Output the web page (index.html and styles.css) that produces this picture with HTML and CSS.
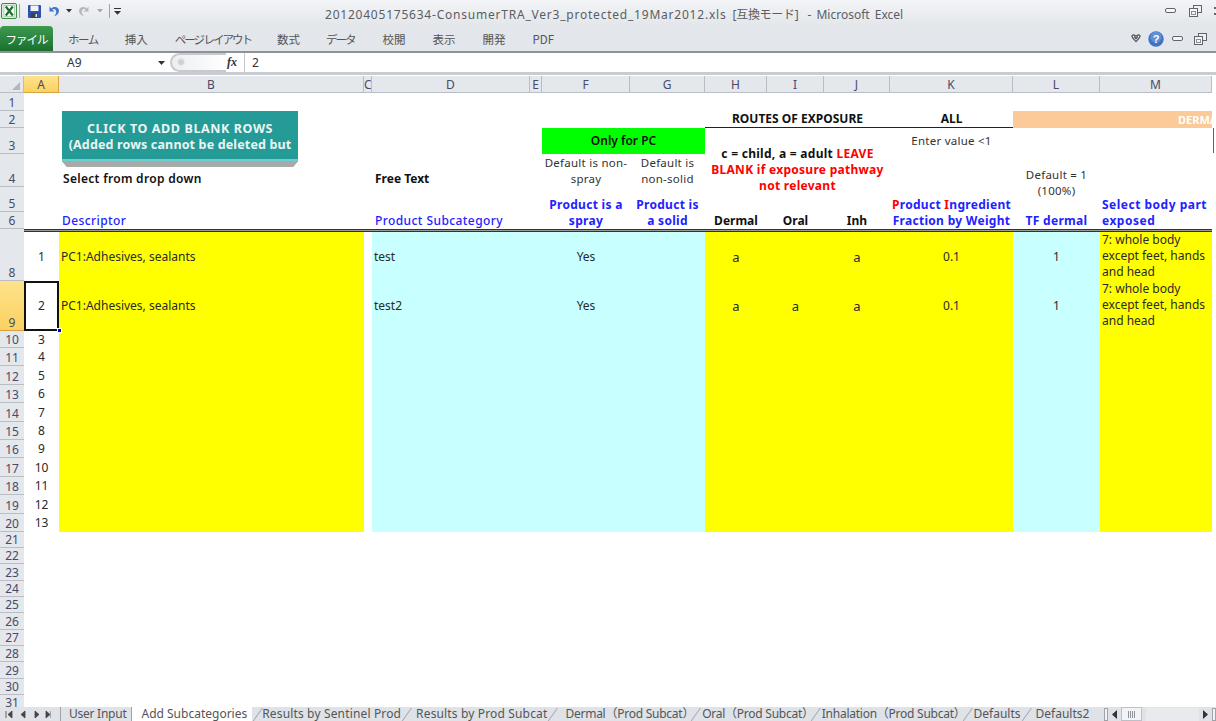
FILE: index.html
```html
<!DOCTYPE html>
<html lang="ja">
<head>
<meta charset="utf-8">
<title>Microsoft Excel</title>
<link rel="stylesheet" href="styles.css">
</head>
<body>
<div class="app">
  <header class="titlebar">
    <div class="qat">
      <svg class="q-excel" width="16" height="16" viewBox="0 0 16 16"><rect x=".5" y=".5" width="15" height="15" rx="1.5" fill="#dcefd8" stroke="#3f8a4a"/><rect x="3" y="2.5" width="10.5" height="11" fill="#fff" stroke="#7fb98a" stroke-width=".6"/><path d="M4.8 3.5 L11.8 12.5 M11.8 3.5 L4.8 12.5" stroke="#1d6f32" stroke-width="2.2"/></svg>
      <span class="qat-sep q-sep1"></span>
      <svg class="q-save" width="15" height="15" viewBox="0 0 15 15"><rect x="1" y="1" width="13" height="13" rx="1" fill="#2f4fa8"/><rect x="3.5" y="1.5" width="8" height="5.5" fill="#f2f4f8"/><rect x="4" y="9" width="7" height="5" fill="#39404e"/><rect x="8.5" y="10" width="1.6" height="3" fill="#dfe3ea"/></svg>
      <svg class="q-undo" width="14" height="14" viewBox="0 0 14 14"><path d="M3.5 2.5 V7.5 H8.5 L6.4 5.4 C8 4.4 10.4 5.4 10.2 8.2 C10.1 9.7 9.2 11 8 12 C11 11.6 13 9.6 13 7 C13 3.4 8.6 1.6 5.4 4.4 Z" fill="#3f78c8"/></svg>
      <svg class="q-drop" width="6" height="4" viewBox="0 0 6 4"><path d="M0 0 H6 L3 3.5 Z" fill="#333"/></svg>
      <svg class="q-drop" width="13" height="14" viewBox="0 0 13 14"><path d="M10.5 2.5 V7.5 H5.5 L7.6 5.4 C6 4.4 3.6 5.4 3.8 8.2 C3.9 9.7 4.8 11 6 12 C3 11.6 1 9.6 1 7 C1 3.4 5.4 1.6 8.6 4.4 Z" fill="#b4b9c0"/></svg>
      <svg class="q-drop" width="6" height="4" viewBox="0 0 6 4"><path d="M0 0 H6 L3 3.5 Z" fill="#a4a8ae"/></svg>
      <span class="qat-sep q-drop"></span>
      <svg class="q-more" width="7" height="7" viewBox="0 0 7 7"><path d="M0 0 H7 V1 H0 Z M0 3 H7 L3.5 6.8 Z" fill="#333"/></svg>
    </div>
    <div class="doc-title"><span class="doc-name">20120405175634-ConsumerTRA_Ver3_protected_19Mar2012.xls</span> <span class="doc-mode">[互換モード]</span> <span class="doc-app">- Microsoft Excel</span></div>
    <div class="winctl">
      <svg width="12" height="8" viewBox="0 0 12 8"><rect x=".5" y="1.5" width="10" height="4" rx="1.5" fill="#f6f7f9" stroke="#60656c"/></svg>
      <svg width="13" height="12" viewBox="0 0 13 12"><rect x="4.5" y=".5" width="8" height="7" fill="#eef0f3" stroke="#60656c"/><rect x=".5" y="3.5" width="8" height="8" fill="#f6f7f9" stroke="#60656c"/><rect x="2.5" y="6.5" width="4" height="3" fill="none" stroke="#8a8f96"/></svg>
      <svg width="2" height="8" viewBox="0 0 2 8"><path d="M0 0 H2 V2 H0 Z M0 6 H2 V8 H0 Z" fill="#60656c"/></svg>
    </div>
  </header>

  <nav class="ribbon">
    <div class="file-tab">ファイル</div>
    <ul class="tabs">
      <li class="t-home">ホーム</li>
      <li class="t-ins">挿入</li>
      <li class="t-page">ページ レイアウト</li>
      <li class="t-form">数式</li>
      <li class="t-data">データ</li>
      <li class="t-rev">校閲</li>
      <li class="t-view">表示</li>
      <li class="t-dev">開発</li>
      <li class="t-pdf">PDF</li>
    </ul>
    <div class="ribbon-ctl">
      <svg width="10" height="9" viewBox="0 0 10 9"><path d="M1 2 C1 .6 3.4 .6 5 2.4 C6.6 .6 9 .6 9 2 C9 3.6 6.4 6 5 7.6 C3.6 6 1 3.6 1 2 Z M3 2.6 L5 4.8 L7 2.6" fill="#fff" stroke="#54585e" stroke-width="1.3"/></svg>
      <svg class="help" width="16" height="16" viewBox="0 0 16 16"><circle cx="8" cy="8" r="7.7" fill="#3f73c4"/><circle cx="8" cy="6" r="5.6" fill="#7ea6e2" opacity=".55"/><text x="8" y="12" text-anchor="middle" class="help-q">?</text></svg>
      <svg class="rb-min" width="12" height="8" viewBox="0 0 12 8"><rect x=".5" y="1.5" width="10" height="4" rx="1.5" fill="#f6f7f9" stroke="#60656c"/></svg>
      <svg class="restore" width="13" height="12" viewBox="0 0 13 12"><rect x="4.5" y=".5" width="8" height="7" fill="#eef0f3" stroke="#60656c"/><rect x=".5" y="3.5" width="8" height="8" fill="#f6f7f9" stroke="#60656c"/><rect x="2.5" y="6.5" width="4" height="3" fill="none" stroke="#8a8f96"/></svg>
    </div>
  </nav>

  <div class="formula">
    <div class="namebox"><span class="name">A9</span><svg width="7" height="4" viewBox="0 0 7 4"><path d="M0 0 H7 L3.5 4 Z" fill="#333"/></svg></div>
    <div class="fx-zone"><span class="fx-grip"></span><span class="fx">fx</span></div>
    <div class="fx-value">2</div>
  </div>

  <div class="sheet">
    <table class="grid">
      <colgroup>
        <col class="c-rh"><col class="c-a"><col class="c-b"><col class="c-c"><col class="c-d"><col class="c-e"><col class="c-f"><col class="c-g"><col class="c-h"><col class="c-i"><col class="c-j"><col class="c-k"><col class="c-l"><col class="c-m">
      </colgroup>
      <thead>
        <tr class="colheads">
          <th class="corner"><span class="corner-mark"></span></th><th class="active">A</th><th>B</th><th>C</th><th>D</th><th>E</th><th>F</th><th>G</th><th>H</th><th>I</th><th>J</th><th>K</th><th>L</th><th>M</th>
        </tr>
      </thead>
      <tbody>
        <tr class="r1"><th>1</th><td colspan="13"></td></tr>
        <tr class="r2"><th>2</th><td colspan="7"></td><td colspan="3" class="hd-black ctr rule-b">ROUTES OF EXPOSURE</td><td class="hd-black ctr rule-b">ALL</td><td colspan="2" class="peach">DERMAL</td></tr>
        <tr class="r3"><th>3</th><td colspan="5"></td><td colspan="2" class="green">Only for PC</td><td colspan="3" rowspan="3" class="routes"><span class="blk">c = child, a = adult </span><span class="red">LEAVE BLANK if exposure pathway not relevant</span></td><td class="note ctr">Enter value &lt;1</td><td></td><td></td></tr>
        <tr class="r4"><th>4</th><td></td><td class="sel-hint">Select from drop down</td><td></td><td class="free">Free Text</td><td></td><td class="note ctr wrap low">Default is non-spray</td><td class="note ctr wrap low">Default is non-solid</td><td></td><td rowspan="2" class="note ctr wrap">Default = 1 (100%)</td><td></td></tr>
        <tr class="r5"><th>5</th><td></td><td></td><td></td><td></td><td></td><td rowspan="2" class="blue-b ctr wrap">Product is a spray</td><td rowspan="2" class="blue-b ctr wrap tight">Product is a solid</td><td rowspan="2" class="blue-b ctr wrap"><span class="red">P</span>roduct <span class="red">I</span>ngredient Fraction by Weight</td><td rowspan="2" class="blue-b left wrap">Select body part exposed</td></tr>
        <tr class="r6"><th>6</th><td></td><td class="blue">Descriptor</td><td></td><td class="blue">Product Subcategory</td><td></td><td class="hd-black ctr">Dermal</td><td class="hd-black ctr">Oral</td><td class="hd-black ctr">Inh</td><td class="blue-b ctr">TF dermal</td></tr>
        <tr class="hidden-row"><th></th><td colspan="13"></td></tr>
        <tr class="r8">
          <th>8</th><td class="ctr">1</td><td class="y txt">PC1:Adhesives, sealants</td><td></td><td class="cy txt">test</td><td class="cy"></td><td class="cy ctr">Yes</td><td class="cy"></td><td class="y ctr val">a</td><td class="y ctr val"></td><td class="y ctr val">a</td><td class="y ctr">0.1</td><td class="cy ctr">1</td><td class="y body-part">7: whole body except feet, hands and head</td>
        </tr>
        <tr class="r9">
          <th class="active">9</th><td class="ctr selected">2<span class="handle"></span></td><td class="y txt">PC1:Adhesives, sealants</td><td></td><td class="cy txt">test2</td><td class="cy"></td><td class="cy ctr">Yes</td><td class="cy"></td><td class="y ctr val">a</td><td class="y ctr val">a</td><td class="y ctr val">a</td><td class="y ctr">0.1</td><td class="cy ctr">1</td><td class="y body-part">7: whole body except feet, hands and head</td>
        </tr>
        <tr class="r10 data"><th>10</th><td class="ctr">3</td><td class="y"></td><td></td><td class="cy" colspan="4"></td><td class="y" colspan="4"></td><td class="cy"></td><td class="y"></td></tr>
        <tr class="ra data"><th>11</th><td class="ctr">4</td><td class="y"></td><td></td><td class="cy" colspan="4"></td><td class="y" colspan="4"></td><td class="cy"></td><td class="y"></td></tr>
        <tr class="rb data"><th>12</th><td class="ctr">5</td><td class="y"></td><td></td><td class="cy" colspan="4"></td><td class="y" colspan="4"></td><td class="cy"></td><td class="y"></td></tr>
        <tr class="ra data"><th>13</th><td class="ctr">6</td><td class="y"></td><td></td><td class="cy" colspan="4"></td><td class="y" colspan="4"></td><td class="cy"></td><td class="y"></td></tr>
        <tr class="rb data"><th>14</th><td class="ctr">7</td><td class="y"></td><td></td><td class="cy" colspan="4"></td><td class="y" colspan="4"></td><td class="cy"></td><td class="y"></td></tr>
        <tr class="ra data"><th>15</th><td class="ctr">8</td><td class="y"></td><td></td><td class="cy" colspan="4"></td><td class="y" colspan="4"></td><td class="cy"></td><td class="y"></td></tr>
        <tr class="ra data"><th>16</th><td class="ctr">9</td><td class="y"></td><td></td><td class="cy" colspan="4"></td><td class="y" colspan="4"></td><td class="cy"></td><td class="y"></td></tr>
        <tr class="rb data"><th>17</th><td class="ctr">10</td><td class="y"></td><td></td><td class="cy" colspan="4"></td><td class="y" colspan="4"></td><td class="cy"></td><td class="y"></td></tr>
        <tr class="ra data"><th>18</th><td class="ctr">11</td><td class="y"></td><td></td><td class="cy" colspan="4"></td><td class="y" colspan="4"></td><td class="cy"></td><td class="y"></td></tr>
        <tr class="rb data"><th>19</th><td class="ctr">12</td><td class="y"></td><td></td><td class="cy" colspan="4"></td><td class="y" colspan="4"></td><td class="cy"></td><td class="y"></td></tr>
        <tr class="ra data"><th>20</th><td class="ctr">13</td><td class="y"></td><td></td><td class="cy" colspan="4"></td><td class="y" colspan="4"></td><td class="cy"></td><td class="y"></td></tr>
        <tr class="rc"><th>21</th><td colspan="13"></td></tr>
        <tr class="rc"><th>22</th><td colspan="13"></td></tr>
        <tr class="rd"><th>23</th><td colspan="13"></td></tr>
        <tr class="rc"><th>24</th><td colspan="13"></td></tr>
        <tr class="rc"><th>25</th><td colspan="13"></td></tr>
        <tr class="rd"><th>26</th><td colspan="13"></td></tr>
        <tr class="rc"><th>27</th><td colspan="13"></td></tr>
        <tr class="rc"><th>28</th><td colspan="13"></td></tr>
        <tr class="rd"><th>29</th><td colspan="13"></td></tr>
        <tr class="rc"><th>30</th><td colspan="13"></td></tr>
        <tr class="rc"><th>31</th><td colspan="13"></td></tr>
      </tbody>
    </table>
    <button class="macro-btn"><span class="btn-l1">CLICK TO ADD BLANK ROWS</span><span class="btn-l2">(Added rows cannot be deleted but</span></button>
    <div class="edge-mark"></div>
  </div>

  <footer class="sheetbar">
    <div class="nav">
      <svg width="46" height="9" viewBox="0 0 46 9"><path d="M1 1 V8 M7 1 L3 4.5 L7 8 Z M20 1 L16 4.5 L20 8 Z M30 1 L34 4.5 L30 8 Z M41 1 L45 4.5 L41 8 Z M46 1 V8" fill="#444" stroke="#444" stroke-width=".8"/></svg>
    </div>
    <ul class="sheets">
      <li class="s1">User Input</li>
      <li class="s-active">Add Subcategories</li>
      <li class="wide">Results by Sentinel Prod</li>
      <li class="wide">Results by Prod Subcat</li>
      <li class="paren">Dermal（Prod Subcat）</li>
      <li class="paren">Oral（Prod Subcat）</li>
      <li class="paren">Inhalation（Prod Subcat）</li>
      <li class="after-paren">Defaults</li>
      <li>Defaults2</li>
    </ul>
    <div class="hscroll">
      <span class="split"></span>
      <svg class="harrow" width="5" height="9" viewBox="0 0 5 9"><path d="M5 0 V9 L0 4.5 Z" fill="#333"/></svg>
      <span class="thumb"><svg width="7" height="7" viewBox="0 0 7 7"><path d="M.5 0 V7 M2.5 0 V7 M4.5 0 V7 M6.5 0 V7" stroke="#8f949c"/></svg></span>
      <span class="track"></span>
      <svg class="harrow" width="5" height="9" viewBox="0 0 5 9"><path d="M0 0 V9 L5 4.5 Z" fill="#333"/></svg>
      <span class="split"></span>
    </div>
  </footer>
</div>
</body>
</html>
```
FILE: styles.css
```css
* { box-sizing: border-box; }
html, body { margin: 0; padding: 0; height: 100%; }
body { font-family: "Noto Sans", "Noto Sans CJK JP", sans-serif; background: #fff; overflow: hidden; color: #222; }
.app { width: 1216px; height: 721px; display: flex; flex-direction: column; overflow: hidden; }

/* Title bar */
.titlebar { height: 26px; flex: none; display: flex; align-items: center; background: linear-gradient(#f3f4f7, #e3e6ea); padding: 0 0 4px 1px; }
.qat { display: flex; align-items: center; width: 324px; flex: none; }
.qat-sep { width: 1px; height: 14px; background: #9fa4ab; }
.q-sep1 { margin-left: 2px; }
.q-save { margin-left: 7px; }
.q-undo { margin-left: 4px; }
.q-drop { margin-left: 6px; }
.q-more { margin-left: 4px; }
.doc-title { flex: none; width: 590px; font: 12px "Noto Sans", "Noto Sans CJK JP", sans-serif; color: #5a5e64; white-space: nowrap; margin-top: 6px; }
.doc-name { letter-spacing: .78px; margin-right: 3px; }
.doc-mode { letter-spacing: -.3px; }
.doc-app { margin-left: 6px; word-spacing: 2px; }
.winctl { margin-left: auto; display: flex; align-items: center; gap: 12px; }

/* Ribbon tabs */
.ribbon { height: 27px; flex: none; display: flex; align-items: flex-end; background: #e3e6ea; border-bottom: 2px solid #8e9196; }
.file-tab { width: 53px; height: 25px; background: linear-gradient(#3d9a4e, #1c6f30); border-radius: 4px 4px 0 0; color: #fff; font: 11.5px "Noto Sans CJK JP", sans-serif; letter-spacing: -1px; display: flex; align-items: center; justify-content: center; }
.tabs { list-style: none; margin: 0; padding: 0; display: flex; height: 25px; align-items: center; font: 11.5px "Noto Sans CJK JP", sans-serif; color: #555; }
.tabs li { white-space: nowrap; }
.t-home { margin-left: 15px; letter-spacing: -1.5px; }
.t-ins { margin-left: 27px; }
.t-page { margin-left: 27px; letter-spacing: -2px; }
.t-form { margin-left: 26px; }
.t-data { margin-left: 26px; letter-spacing: -2px; }
.t-rev { margin-left: 28px; }
.t-view { margin-left: 27px; }
.t-dev { margin-left: 27px; }
.t-pdf { margin-left: 27px; }
.ribbon-ctl { margin-left: auto; display: flex; align-items: center; gap: 7px; height: 25px; padding-right: 9px; }
.rb-min { margin-left: 1px; }
.ribbon-ctl .restore { margin-left: 3px; }
.help-q { font: bold 11px "Liberation Sans", sans-serif; fill: #fff; }

/* Formula bar */
.formula { height: 19px; flex: none; display: flex; align-items: center; background: #fff; font: 12px "Noto Sans", sans-serif; color: #333; }
.namebox { width: 168px; height: 100%; display: flex; align-items: center; justify-content: space-between; padding: 0 3px 0 67px; }
.fx-zone { width: 77px; height: 100%; display: flex; align-items: center; justify-content: flex-end; border-right: 1px solid #c4c7cc; padding-right: 4px; position: relative; }
.fx-grip { position: absolute; left: 2px; top: 0; width: 56px; height: 19px; border: 2px solid #c6c9ce; border-right: 0; border-radius: 10px 0 0 10px; background: radial-gradient(circle at 9px 7px, #c4c7cc 0, #d8dadd 3px, transparent 4px), linear-gradient(to right, #eceef0, #fff); }
.fx { font: italic bold 12px "Liberation Serif", serif; margin-right: 3px; }
.fx-value { padding-left: 7px; }

/* Sheet */
.sheet { flex: 1; min-height: 0; position: relative; overflow: hidden; border-top: 3px solid #c9ccd1; padding-top: 1px; background: #fff; }
.grid { table-layout: fixed; border-collapse: separate; border-spacing: 0; width: 1212px; font-size: 12px; line-height: 16px; color: #2a2a2a; }
.c-rh { width: 24px; } .c-a { width: 35px; } .c-b { width: 305px; } .c-c { width: 8px; } .c-d { width: 158px; } .c-e { width: 12px; }
.c-f { width: 88px; } .c-g { width: 75px; } .c-h { width: 62px; } .c-i { width: 57px; } .c-j { width: 66px; } .c-k { width: 123px; } .c-l { width: 87px; } .c-m { width: 112px; }
.grid td { padding: 0; white-space: nowrap; overflow: hidden; vertical-align: middle; }
.grid th { padding: 0; font-weight: 400; background: #e4e7eb; color: #4a4a68; overflow: hidden; }
.colheads { height: 17px; }
.colheads th { border-right: 1px solid #b9bdc4; border-bottom: 1px solid #b9bdc4; font-size: 12px; line-height: 15px; }
.colheads th.active { background: linear-gradient(#fde38c, #fbd160); border: 1px solid #dca33c; border-width: 0 1px 1px 0; }
.corner { position: relative; }
.corner-mark { position: absolute; right: 3px; bottom: 2px; border: 4px solid transparent; border-right-color: #b4b8be; border-bottom-color: #b4b8be; }
tbody th { border-bottom: 1px solid #b9bdc4; vertical-align: bottom; text-align: center; font-size: 12px; line-height: 15px; }
tbody th.active { background: linear-gradient(#fde38c, #fbd160); border-bottom: 1px solid #dca33c; }
.r1 { height: 18px; } .r2 { height: 16px; } .r3 { height: 26px; } .r4 { height: 33px; } .r5 { height: 25px; } .r6 { height: 17px; }
.r8 { height: 49px; } .r9 { height: 50px; } .r10 { height: 17px; }
.ra { height: 18px; } .rb { height: 19px; } .rc { height: 16px; } .rd { height: 17px; }
.hidden-row { height: 3px; line-height: 0; font-size: 0; }
.hidden-row td { background: #9a9a96; border-top: 1px solid #333; border-bottom: 1px solid #333; }
.hidden-row th { border-bottom: 0; }
.ctr { text-align: center; }
.left { text-align: left; }
.grid td.wrap { white-space: normal; }
.hd-black { font-weight: 700; color: #111; }
.grid td.hd-black { vertical-align: bottom; }
.rule-b { border-bottom: 1px solid #222; }
.grid td.peach { background: #fcc998; color: #fff; font-weight: 700; font-size: 11px; padding-left: 165px; }
.green { background: #00ff00; color: #111; text-align: center; font-weight: 600; }
.grid td.routes { white-space: normal; text-align: center; font-weight: 700; padding: 0; letter-spacing: .28px; }
.blk { color: #111; }
.red { color: #ff0000; }
.note { color: #333; font-size: 11.5px; letter-spacing: .25px; }
.grid td.low { vertical-align: bottom; }
.grid td.blue-b { vertical-align: bottom; color: #2222ff; font-weight: 700; letter-spacing: .3px; }
.grid td.tight { padding: 0 4px; }
.grid td.left { padding-left: 2px; letter-spacing: .5px; }
.grid td.sel-hint { font-weight: 600; color: #111; padding-left: 4px; vertical-align: bottom; letter-spacing: .3px; }
.grid td.free { font-weight: 700; color: #111; padding-left: 3px; vertical-align: bottom; }
.grid td.blue { color: #2222ff; vertical-align: bottom; padding-left: 3px; font-weight: 500; letter-spacing: .42px; }
.y { background: #ffff00; }
.cy { background: #c8ffff; }
.grid td.txt { padding-left: 2px; }
.val { font-size: 13px; }
.grid td.body-part { white-space: normal; padding: 0 2px; vertical-align: top; }
.grid td.selected { position: relative; overflow: visible; box-shadow: inset 0 0 0 2px #111; }
.handle { position: absolute; right: -3px; bottom: -2px; width: 5px; height: 5px; background: #0000cc; border: 1px solid #fff; }

.macro-btn { position: absolute; left: 62px; top: 36px; width: 236px; height: 56px; padding: 0 0 4px; border: 0; background: linear-gradient(#259b97 0, #259b97 86%, #6bcfcf 86%, #6bcfcf 90%, #a9a9a9 90%); clip-path: polygon(0 0, 100% 0, 100% 90%, 98% 100%, 2% 100%, 0 90%); color: #eaf6f5; font: 700 12.5px/16px "Noto Sans", sans-serif; display: flex; flex-direction: column; align-items: center; justify-content: center; white-space: nowrap; }
.btn-l1 { letter-spacing: .6px; }
.btn-l2 { letter-spacing: .15px; }
.edge-mark { position: absolute; left: 1213px; top: 53px; width: 1px; height: 25px; background: #3a5fd0; }

/* Sheet tabs */
.sheetbar { height: 14px; flex: none; display: flex; align-items: center; background: #dfe3e8; font: 12px "Noto Sans", "Noto Sans CJK JP", sans-serif; color: #555; }
.nav { width: 60px; flex: none; display: flex; align-items: center; padding-left: 5px; }
.sheets { list-style: none; margin: 0; padding: 0; display: flex; height: 100%; width: 1044px; flex: none; overflow: hidden; }
.sheets li { position: relative; white-space: nowrap; padding-left: 15px; line-height: 14px; flex: none; }
.sheets li::before { content: ""; position: absolute; left: 5px; top: 1px; bottom: -1px; border-left: 1px solid #9ea3aa; transform: skewX(-35deg); }
.sheets .wide { letter-spacing: .15px; }
.sheets .paren { letter-spacing: -.25px; }
.sheets .s1 { padding: 0 5px 0 8px; letter-spacing: -.25px; border-left: 1px solid #9ea3aa; border-right: 1px solid #9ea3aa; }
.sheets .s1::before, .sheets .s-active::before { display: none; }
.sheets .s-active { background: #fff; padding: 0 5px 0 9px; }
.sheets .s-active + li { padding-left: 10px; }
.sheets .wide + .paren { padding-left: 18px; }
.sheets .paren + .paren { padding-left: 8px; }
.sheets .paren + .after-paren { padding-left: 8px; }
.sheets .paren + .paren::before, .sheets .paren + .after-paren::before { left: 1px; }
.hscroll { flex: 1; display: flex; align-items: center; gap: 4px; height: 100%; }
.split { width: 4px; height: 13px; border: 1px solid #9ea3aa; background: #f2f3f5; flex: none; }
.harrow { flex: none; }
.thumb { width: 21px; height: 14px; border: 1px solid #bdc1c7; background: #f2f3f5; display: flex; align-items: center; justify-content: center; flex: none; }
.track { flex: 1; height: 13px; background: #e8eaee; }
```
